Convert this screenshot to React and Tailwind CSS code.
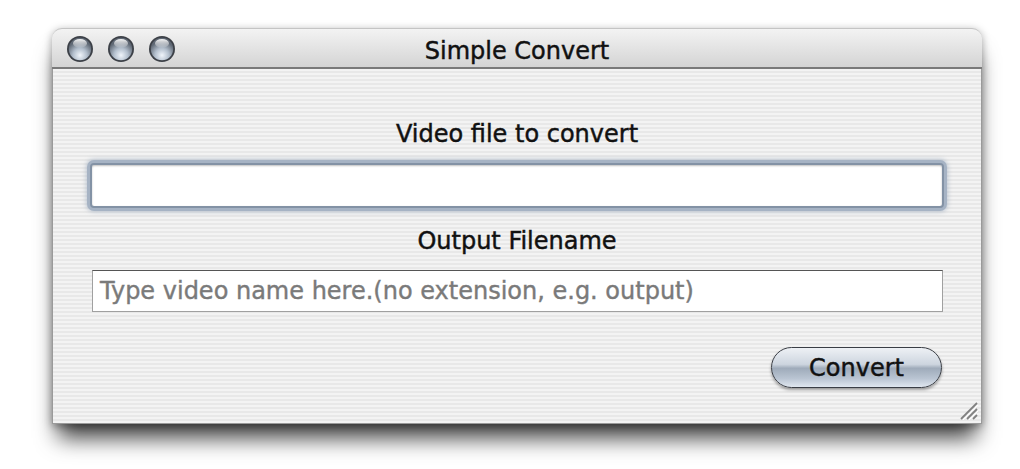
import React from "react";

function Light() {
  return (
    <svg width="28" height="28" viewBox="0 0 28 28">
      <defs>
        <radialGradient id="lg" cx="50%" cy="78%" r="62%">
          <stop offset="0%" stopColor="#f0f5fb" />
          <stop offset="50%" stopColor="#b3bfcd" />
          <stop offset="100%" stopColor="#5f6874" />
        </radialGradient>
        <linearGradient id="hl" x1="0" y1="0" x2="0" y2="1">
          <stop offset="0%" stopColor="#ffffff" stopOpacity="0.95" />
          <stop offset="100%" stopColor="#ffffff" stopOpacity="0.1" />
        </linearGradient>
      </defs>
      <circle cx="14" cy="14" r="13" fill="#3c4047" />
      <circle cx="14" cy="14" r="11.2" fill="url(#lg)" />
      <ellipse cx="14" cy="8.3" rx="7" ry="4.4" fill="url(#hl)" />
    </svg>
  );
}

function Grip() {
  return (
    <svg width="22" height="22" viewBox="0 0 22 22">
      <line x1="20" y1="4" x2="4" y2="20" stroke="#808080" strokeWidth="1.8" />
      <line x1="20" y1="10" x2="10" y2="20" stroke="#808080" strokeWidth="1.8" />
      <line x1="20" y1="16" x2="16" y2="20" stroke="#808080" strokeWidth="1.8" />
      <line x1="21" y1="6" x2="6" y2="21" stroke="#ffffff" strokeWidth="1" />
      <line x1="21" y1="12" x2="12" y2="21" stroke="#ffffff" strokeWidth="1" />
    </svg>
  );
}

export default function App() {
  return (
    <div
      className="w-[1020px] h-[469px] bg-white pt-[28px] pl-[52px] overflow-hidden"
      style={{ fontFamily: '"DejaVu Sans", "Liberation Sans", sans-serif' }}
    >
      <div className="w-[930px] h-[396px] rounded-t-[10px] flex flex-col bg-[#ececec] shadow-[0_20px_22px_-6px_rgba(0,0,0,0.75),0_2px_8px_rgba(0,0,0,0.35)]">
        <div className="h-[41px] rounded-t-[10px] border-t border-[#c4c4c4] bg-[linear-gradient(#f3f3f3,#d4d4d4)] border-b-[2px] border-b-[#7a7a7a] flex items-center relative">
          <div className="flex gap-[13px] pl-[14px] pt-[2px]">
            <Light />
            <Light />
            <Light />
          </div>
          <div className="absolute inset-0 flex items-center justify-center text-[24px] text-[#111] pt-[5px] [-webkit-text-stroke:0.45px_#111]">
            Simple Convert
          </div>
        </div>
        <div className="flex-1 relative border-x border-b border-[#9a9a9a] bg-[repeating-linear-gradient(180deg,#f3f3f3_0px,#f3f3f3_2px,#e8e8e8_2px,#e8e8e8_4px)] flex flex-col px-[37px] pt-[50px]">
          <div className="text-center text-[24px] leading-[30px] text-[#111] [-webkit-text-stroke:0.45px_#111]">Video file to convert</div>
          <div className="mt-[14px] h-[45px] w-[854px] rounded-[4px] bg-white border-[2px] border-[#8392a5] shadow-[0_0_0_3px_#a6b3c4,0_0_4px_4px_rgba(150,165,185,0.55),inset_0_1px_2px_rgba(0,0,0,0.25)]" />
          <div className="mt-[18px] text-center text-[24px] leading-[30px] text-[#111] [-webkit-text-stroke:0.45px_#111]">Output Filename</div>
          <div className="mt-[14px] ml-[2px] h-[42px] w-[851px] bg-white border border-[#a0a0a0] border-t-[#555] flex items-center pl-[7px] text-[24px] text-[#7a7a7a] [-webkit-text-stroke:0.4px_#7a7a7a]">
            Type video name here.(no extension, e.g. output)
          </div>
          <div className="mt-[35px] flex justify-end pr-[2px]">
            <div className="w-[171px] h-[41px] rounded-full border-[1.5px] border-[#3a3e45] bg-[linear-gradient(180deg,#eef1f5_0%,#cdd5df_42%,#9fabba_52%,#b9c4d2_78%,#e0e7ef_100%)] shadow-[0_2px_3px_rgba(0,0,0,0.35)] flex items-center justify-center text-[24px] text-[#111] [-webkit-text-stroke:0.45px_#111]">
              Convert
            </div>
          </div>
          <div className="absolute right-[2px] bottom-[2px]">
            <Grip />
          </div>
        </div>
      </div>
    </div>
  );
}
